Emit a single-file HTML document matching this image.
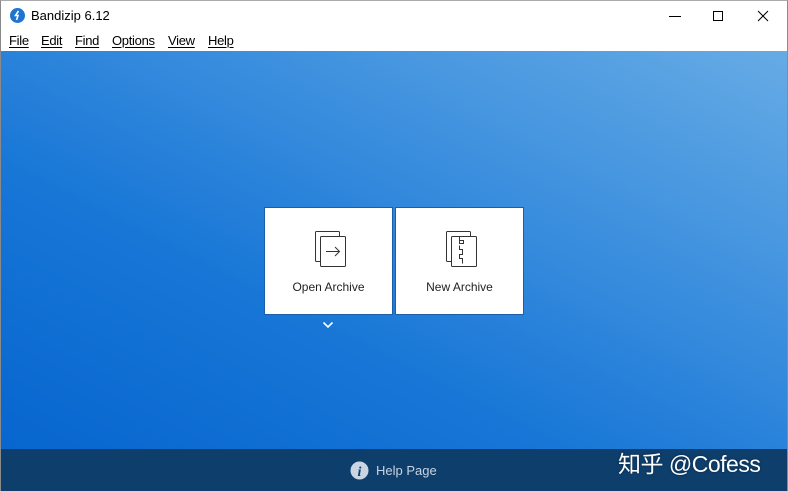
<!DOCTYPE html>
<html><head><meta charset="utf-8"><style>
*{margin:0;padding:0;box-sizing:border-box}
body{width:788px;height:491px;overflow:hidden;font-family:"Liberation Sans","Noto Sans CJK SC",sans-serif;position:relative;background:#fff}
.win{position:absolute;left:0;top:0;width:788px;height:491px;border:1px solid #8a8a8a;border-top-color:#aaa}
.title{position:absolute;left:0;top:0;width:786px;height:29px;background:#fff}
.title .t{position:absolute;left:30px;top:7px;font-size:13px;color:#000}
.menu{position:absolute;left:0;top:29px;width:786px;height:21px;background:#fff;font-size:13px}
.menu span{position:absolute;top:3px;text-decoration:underline;text-decoration-thickness:1px;text-underline-offset:2px;letter-spacing:-0.3px}
.main{position:absolute;left:0;top:50px;width:786px;height:398px;background:linear-gradient(to top right,#0766cf 0%,#1776d6 35%,#3c8fde 65%,#66abe5 100%)}
.card{position:absolute;top:206px;width:129px;height:108px;background:#fff;border:1px solid #1a5fa8}
.card .l{position:absolute;left:0;right:0;top:72px;text-align:center;font-size:12px;color:#222}
.bot{position:absolute;left:0;top:448px;width:786px;height:42px;background:#0d3e6c}
.bot .h{position:absolute;left:375px;top:14px;font-size:13px;color:#c8d4e0}
.wm{position:absolute;left:617px;top:444px;font-size:23px;color:#fff;letter-spacing:-0.5px;text-shadow:0 0 2px rgba(0,0,0,.4)}
</style></head><body>
<div class="win">
<div class="title">
<svg style="position:absolute;left:9px;top:7px" width="15" height="15" viewBox="0 0 15 15"><circle cx="7.5" cy="7.5" r="7.5" fill="#1f74d0"/><path d="M8.5 3L5.5 7.5H8L6.5 12" stroke="#fff" stroke-width="1.6" fill="none"/></svg>
<span class="t">Bandizip 6.12</span>
<svg style="position:absolute;left:660px;top:8px" width="120" height="14"><path d="M8 7.5h12" stroke="#000"/><rect x="52.5" y="2.5" width="9" height="9" fill="none" stroke="#000"/><path d="M97 2l10 10M107 2l-10 10" stroke="#000"/></svg>
</div>
<div class="menu">
<span style="left:8px">File</span><span style="left:40px">Edit</span><span style="left:74px">Find</span><span style="left:111px">Options</span><span style="left:167px">View</span><span style="left:207px">Help</span>
</div>
<div class="main"></div>
<div class="card" style="left:263px">
<svg style="position:absolute;left:49px;top:22px" width="34" height="38"><rect x="1.5" y="1.5" width="24" height="30" rx="1" fill="#fff" stroke="#333"/><rect x="6.5" y="6.5" width="25" height="30" rx="1" fill="#fff" stroke="#333"/><path d="M12 21.5h13M21 17l4.5 4.5L21 26" stroke="#333" fill="none"/></svg>
<div class="l">Open Archive</div></div>
<div class="card" style="left:394px">
<svg style="position:absolute;left:49px;top:22px" width="34" height="38"><rect x="1.5" y="1.5" width="24" height="30" rx="1" fill="#fff" stroke="#333"/><rect x="6.5" y="6.5" width="25" height="30" rx="1" fill="#fff" stroke="#333"/><path d="M14.5 6.5v4M14.5 15.5v4h3v5h-3v4h3v5" stroke="#333" fill="none"/><rect x="14.5" y="10.5" width="4" height="3" fill="#fff" stroke="#333"/></svg>
<div class="l">New Archive</div></div>
<svg style="position:absolute;left:321px;top:320px" width="12" height="8"><path d="M1.5 1.5l4.5 4.5 4.5-4.5" stroke="#fff" stroke-width="1.6" fill="none"/></svg>
<div class="bot">
<svg style="position:absolute;left:349px;top:12px" width="19" height="19"><circle cx="9.5" cy="9.5" r="9" fill="#c9d5e2"/><text x="9.5" y="15" text-anchor="middle" font-family="Liberation Serif" font-style="italic" font-weight="bold" font-size="14" fill="#0d3e6c">i</text></svg>
<span class="h">Help Page</span>
</div>
<div class="wm">知乎 @Cofess</div>
</div>
</body></html>
